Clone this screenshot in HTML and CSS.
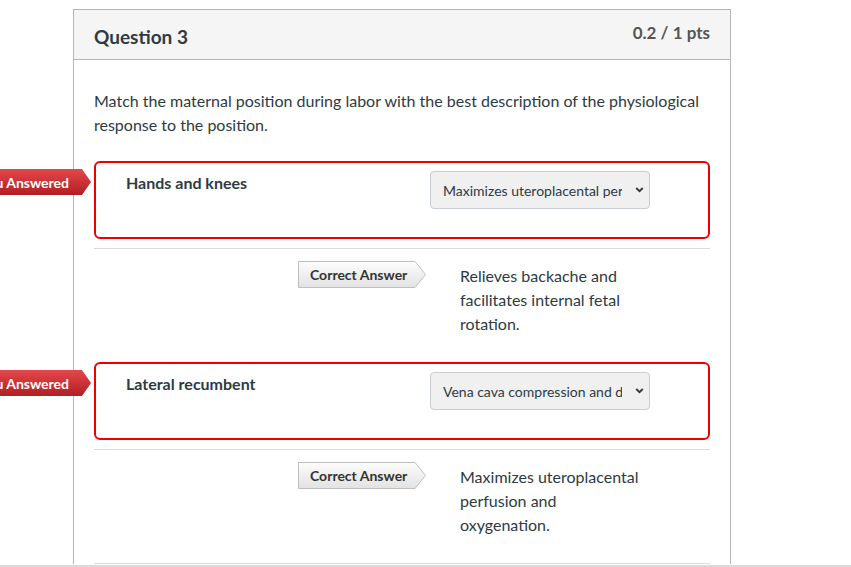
FILE: index.html
```html
<!DOCTYPE html>
<html lang="en">
<head>
  <meta charset="UTF-8" />
  <meta name="viewport" content="width=device-width, initial-scale=1.0" />
  <title>Question 3</title>
  <link rel="stylesheet" href="styles.css">
</head>
<body>
  <div class="question">
    <div class="question-header">
      <h2 class="question-title">Question 3</h2>
      <div class="question-points">0.2 / 1 pts</div>
    </div>
    <div class="question-body">
      <p class="question-text">Match the maternal position during labor with the best description of the physiological response to the position.</p>

      <div class="answer-group">
        <div class="answer wrong">
          <span class="tag-you">
            <svg class="tag-bg" viewBox="0 0 116 26" preserveAspectRatio="none"><defs><linearGradient id="rg1" x1="0" y1="0" x2="0" y2="1"><stop offset="0" stop-color="#e5474b"/><stop offset="1" stop-color="#b21e22"/></linearGradient></defs><polygon points="0,0 107,0 116,13 107,26 0,26" fill="url(#rg1)"/></svg>
            <span class="tag-label">You Answered</span>
          </span>
          <div class="answer-label">Hands and knees</div>
          <div class="select-wrap">
            <select class="answer-select">
              <option>Maximizes uteroplacental perfusion and oxygenation.</option>
            </select>
            <svg class="select-chevron" viewBox="0 0 10 7"><path d="M1.2 1.2 L5 5 L8.8 1.2" fill="none" stroke="#2d3b45" stroke-width="2.2"/></svg>
          </div>
        </div>
        <div class="correct-row">
          <span class="tag-correct">
            <svg class="tag-bg" viewBox="0 0 128 28" preserveAspectRatio="none"><defs><linearGradient id="gg1" x1="0" y1="0" x2="0" y2="1"><stop offset="0" stop-color="#fdfdfd"/><stop offset="1" stop-color="#e2e2e2"/></linearGradient></defs><polygon points="0.5,0.5 117,0.5 127.5,14 117,27.5 0.5,27.5" fill="url(#gg1)" stroke="#bdbdbd" stroke-width="1"/></svg>
            <span class="tag-label">Correct Answer</span>
          </span>
          <div class="correct-text">Relieves backache and facilitates internal fetal rotation.</div>
        </div>
      </div>

      <div class="answer-group">
        <div class="answer wrong">
          <span class="tag-you">
            <svg class="tag-bg" viewBox="0 0 116 26" preserveAspectRatio="none"><defs><linearGradient id="rg2" x1="0" y1="0" x2="0" y2="1"><stop offset="0" stop-color="#e5474b"/><stop offset="1" stop-color="#b21e22"/></linearGradient></defs><polygon points="0,0 107,0 116,13 107,26 0,26" fill="url(#rg2)"/></svg>
            <span class="tag-label">You Answered</span>
          </span>
          <div class="answer-label">Lateral recumbent</div>
          <div class="select-wrap">
            <select class="answer-select">
              <option>Vena cava compression and decreased placental perfusion.</option>
            </select>
            <svg class="select-chevron" viewBox="0 0 10 7"><path d="M1.2 1.2 L5 5 L8.8 1.2" fill="none" stroke="#2d3b45" stroke-width="2.2"/></svg>
          </div>
        </div>
        <div class="correct-row">
          <span class="tag-correct">
            <svg class="tag-bg" viewBox="0 0 128 28" preserveAspectRatio="none"><defs><linearGradient id="gg2" x1="0" y1="0" x2="0" y2="1"><stop offset="0" stop-color="#fdfdfd"/><stop offset="1" stop-color="#e2e2e2"/></linearGradient></defs><polygon points="0.5,0.5 117,0.5 127.5,14 117,27.5 0.5,27.5" fill="url(#gg2)" stroke="#bdbdbd" stroke-width="1"/></svg>
            <span class="tag-label">Correct Answer</span>
          </span>
          <div class="correct-text">Maximizes uteroplacental perfusion and oxygenation.</div>
        </div>
      </div>
      <div class="answer-sep"></div>
    </div>
  </div>
</body>
</html>
```

FILE: styles.css
```css
html, body { margin: 0; padding: 0; background: #fff; overflow: hidden; }
body { font-family: Lato, "Open Sans", sans-serif; color: #2d3b45; padding: 9px 0 0 73px; height: 567px; box-sizing: border-box; }
body::after { content: ""; position: fixed; left: 0; right: 0; bottom: 0; height: 2px; background: #d9d9d9; }

.question { width: 658px; box-sizing: border-box; border: 1px solid #b5b5b5; border-bottom: none; background: #fff; }
.question-header { display: flex; justify-content: space-between; align-items: flex-start; height: 49px; padding: 0 20px; background: #f5f5f5; border-bottom: 1px solid #b5b5b5; }
.question-title { margin: 14px 0 0; font-size: 19px; font-weight: 700; line-height: 26px; color: #2d3b45; }
.question-points { margin-top: 12px; font-size: 17px; font-weight: 700; line-height: 22px; color: #555; }

.question-body { padding: 29px 20px 0; }
.question-text { margin: 0 0 24px; font-size: 16px; line-height: 24px; }

.answer-group { padding-bottom: 26px; }
.answer { position: relative; display: flex; align-items: flex-start; height: 74px; border: 2px solid #ee0000; border-radius: 6px; }
.answer-label { width: 304px; margin: 9px 0 0 30px; font-size: 16px; font-weight: 700; line-height: 22px; }

.select-wrap { position: relative; margin-top: 8px; }
.answer-select { appearance: none; -webkit-appearance: none; width: 220px; height: 38px; padding: 0 27px 0 12px; border: 1px solid #c7cdd1; border-radius: 4px; background: #f0f0f0; font-family: Lato, "Open Sans", sans-serif; font-size: 14px; color: #2d3b45; }
.select-chevron { position: absolute; right: 6px; top: 16px; width: 9px; height: 6px; pointer-events: none; }

.tag-you, .tag-correct { display: inline-flex; align-items: center; }
.tag-correct { position: relative; }
.tag-bg { position: absolute; left: 0; top: 0; width: 100%; height: 100%; }
.tag-label { position: relative; font-weight: 700; font-size: 14px; white-space: nowrap; }

.tag-you { position: absolute; left: -121px; top: 6px; width: 116px; height: 26px; justify-content: flex-end; }
.tag-you .tag-label { color: #fff; padding-right: 22px; }

.correct-row { display: flex; align-items: flex-start; margin-top: 9px; padding-top: 12px; border-top: 1px solid #dcdcdc; }
.tag-correct { width: 128px; height: 27px; margin-left: 204px; }
.tag-correct .tag-label { color: #333; padding-left: 12px; }
.correct-text { width: 183px; margin: 3px 0 0 34px; font-size: 16px; line-height: 24px; }

.answer-sep { border-top: 1px solid #dcdcdc; }
```
